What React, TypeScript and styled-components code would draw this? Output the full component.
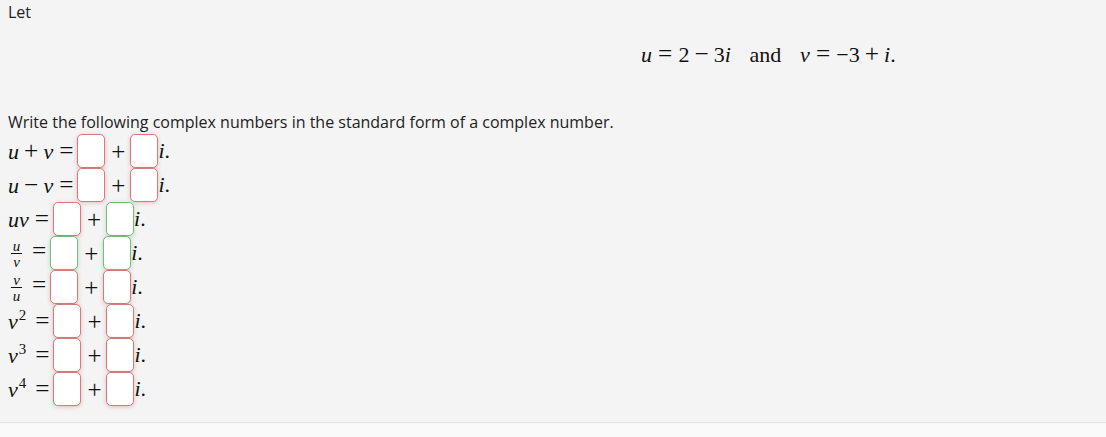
import React from 'react'
import styled, { createGlobalStyle, css } from 'styled-components'

const Global = createGlobalStyle`
  html, body {
    margin: 0;
    padding: 0;
    background: #fafafa;
  }
`

type Status = 'wrong' | 'right'

const serif = `'Liberation Serif', 'Times New Roman', serif`

const Page = styled.div`
  background: #f4f4f4;
  height: 423px;
  border-bottom: 1px solid #e2e2e2;
  box-sizing: border-box;
  padding: 0 8px;
  font-family: 'Open Sans', 'Noto Sans', sans-serif;
  font-size: 16px;
  color: #222;
`

const Para = styled.p<{ top: number }>`
  margin: ${({ top }) => top}px 0 0 0;
  line-height: 24px;
`

const Display = styled.div`
  margin-top: 18px;
  padding-left: 633px;
  height: 24px;
  display: flex;
  align-items: center;
`

const MathText = styled.span<{ size?: number }>`
  display: inline-block;
  font-family: ${serif};
  font-size: ${({ size }) => size ?? 22}px;
  line-height: 1;
  color: #111;
  white-space: nowrap;
`

const V = styled.i`
  font-family: ${serif};
  font-style: italic;
`

const Op = styled.span`
  font-family: ${serif};
  font-size: 1.15em;
  line-height: 1;
  margin: 0 0.2em;
`

const Rel = styled.span<{ tight?: boolean }>`
  font-family: ${serif};
  font-size: 1.15em;
  line-height: 1;
  margin: ${({ tight }) => (tight ? '0 0.15em 0 0.24em' : '0 0.24em')};
`

const Word = styled.span`
  font-family: ${serif};
  margin: 0 0.85em;
`

const Rows = styled.div`
  display: flex;
  flex-direction: column;
`

const Row = styled.div`
  height: 34px;
  display: flex;
  align-items: center;
`

const Box = styled.div<{ status: Status }>`
  width: 28px;
  height: 34px;
  box-sizing: border-box;
  background: #fff;
  border-radius: 5px;
  ${({ status }) =>
    status === 'wrong'
      ? css`
          border: 1px solid #d27b7b;
          box-shadow: 0 1px 4px rgba(215, 90, 90, 0.35);
        `
      : css`
          border: 1px solid #79b979;
          box-shadow: 0 1px 4px rgba(90, 170, 90, 0.35);
        `}
`

const Plus = styled.span`
  margin: 0 5px 0 6px;
  font-family: ${serif};
  font-size: 25px;
  line-height: 1;
  color: #111;
`

const Frac = styled.span`
  display: inline-flex;
  flex-direction: column;
  align-items: center;
  vertical-align: middle;
  font-family: ${serif};
  font-size: 15px;
  line-height: 11px;
  margin: 0 4px 0 3px;
  font-style: italic;
`

const FracBar = styled.span`
  display: block;
  width: 11px;
  border-top: 1px solid #111;
  margin: 1px 0 3px;
`

const Sup = styled.span`
  font-family: ${serif};
  font-size: 0.68em;
  vertical-align: 0.6em;
  line-height: 0;
  margin: 0 3px 0 1px;
`

type Item = { label: React.ReactNode; a: Status; b: Status }

const items: Item[] = [
  {
    label: (
      <>
        <V>u</V>
        <Op>+</Op>
        <V>v</V>
      </>
    ),
    a: 'wrong',
    b: 'wrong',
  },
  {
    label: (
      <>
        <V>u</V>
        <Op>−</Op>
        <V>v</V>
      </>
    ),
    a: 'wrong',
    b: 'wrong',
  },
  { label: <V>uv</V>, a: 'wrong', b: 'right' },
  {
    label: (
      <Frac>
        <span>u</span>
        <FracBar />
        <span>v</span>
      </Frac>
    ),
    a: 'right',
    b: 'right',
  },
  {
    label: (
      <Frac>
        <span>v</span>
        <FracBar />
        <span>u</span>
      </Frac>
    ),
    a: 'wrong',
    b: 'wrong',
  },
  {
    label: (
      <>
        <V>v</V>
        <Sup>2</Sup>
      </>
    ),
    a: 'wrong',
    b: 'wrong',
  },
  {
    label: (
      <>
        <V>v</V>
        <Sup>3</Sup>
      </>
    ),
    a: 'wrong',
    b: 'wrong',
  },
  {
    label: (
      <>
        <V>v</V>
        <Sup>4</Sup>
      </>
    ),
    a: 'wrong',
    b: 'wrong',
  },
]

export default function App() {
  return (
    <>
      <Global />
      <Page>
        <Para top={0}>Let</Para>
        <Display>
          <MathText size={22}>
            <V>u</V>
            <Rel>=</Rel>2<Op>−</Op>3<V>i</V>
            <Word>and</Word>
            <V>v</V>
            <Rel>=</Rel>−3<Op>+</Op>
            <V>i</V>.
          </MathText>
        </Display>
        <Para top={44}>Write the following complex numbers in the standard form of a complex number.</Para>
        <Rows>
          {items.map((it, n) => (
            <Row key={n}>
              <MathText>
                {it.label}
                <Rel tight>=</Rel>
              </MathText>
              <Box status={it.a} />
              <Plus>+</Plus>
              <Box status={it.b} />
              <MathText>
                <V>i</V>.
              </MathText>
            </Row>
          ))}
        </Rows>
      </Page>
    </>
  )
}
